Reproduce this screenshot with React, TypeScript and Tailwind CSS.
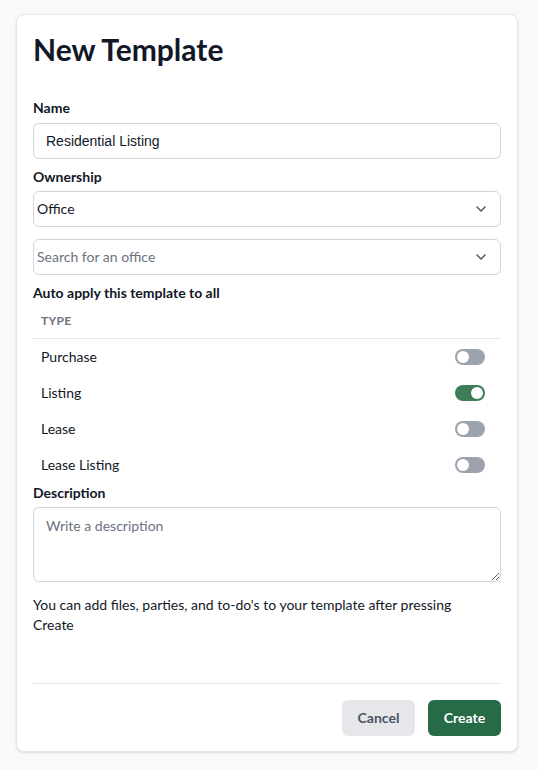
import React, { useState } from 'react';

const types = ['Purchase', 'Listing', 'Lease', 'Lease Listing'];

function Chevron() {
  return (
    <svg width="10" height="6" viewBox="0 0 10 6" fill="none" className="shrink-0">
      <path d="M1 1l4 4 4-4" stroke="#4b5563" strokeWidth="1.5" strokeLinecap="round" strokeLinejoin="round" />
    </svg>
  );
}

function Toggle({ on, onChange }: { on: boolean; onChange: () => void }) {
  return (
    <button
      type="button"
      onClick={onChange}
      className={`flex h-4 w-[30px] items-center rounded-full px-[2px] ${on ? 'bg-[#3e7d58] justify-end' : 'bg-[#9ca3af] justify-start'}`}
    >
      <span className="block h-3 w-3 rounded-full bg-white" />
    </button>
  );
}

export default function App() {
  const [enabled, setEnabled] = useState<Record<string, boolean>>({ Listing: true });

  return (
    <div className="min-h-[770px] bg-[#f8f9fb] pt-[14px] pl-4 font-['Lato',sans-serif] text-[#111827]">
      <div className="w-[502px] rounded-lg border border-[#e5e7eb] bg-white px-4 pt-4 pb-[15px] shadow-sm">
        <h1 className="mb-[31px] text-[30px] font-bold leading-9 text-[#111827]">New Template</h1>

        <label className="mb-[5px] block text-sm font-bold leading-5">Name</label>
        <input
          defaultValue="Residential Listing"
          className="block h-9 w-full rounded-md border border-[#d1d5db] px-3 font-['Liberation_Sans',Arial,sans-serif] text-sm text-[#111827] outline-none"
        />

        <label className="mt-2 mb-1 block text-sm font-bold leading-5">Ownership</label>
        <div className="flex h-9 w-full items-center justify-between rounded-md border border-[#d1d5db] pl-[3px] pr-[14px] text-sm text-[#111827]">
          <span>Office</span>
          <Chevron />
        </div>
        <div className="mt-3 flex h-9 w-full items-center justify-between rounded-md border border-[#d1d5db] pl-[3px] pr-[14px] text-sm text-[#6b7280]">
          <span>Search for an office</span>
          <Chevron />
        </div>

        <p className="mt-2 text-sm font-bold leading-5">Auto apply this template to all</p>
        <div className="flex h-9 items-center border-b border-[#e5e7eb] px-2 text-xs font-bold uppercase tracking-wide text-[#6b7280]">
          Type
        </div>
        {types.map((t) => (
          <div key={t} className="flex h-9 items-center justify-between pl-2 pr-4 text-sm text-[#111827]">
            <span>{t}</span>
            <Toggle on={!!enabled[t]} onChange={() => setEnabled({ ...enabled, [t]: !enabled[t] })} />
          </div>
        ))}

        <label className="mb-1 block text-sm font-bold leading-5">Description</label>
        <textarea
          placeholder="Write a description"
          className="block h-[75px] w-full rounded-md border border-[#d1d5db] px-3 py-2 text-sm text-[#111827] outline-none placeholder:text-[#6b7280]"
        />

        <p className="mt-[13px] w-[430px] text-sm leading-5 text-[#111827]">
          You can add files, parties, and to-do's to your template after pressing Create
        </p>

        <div className="mt-12 flex justify-end gap-[13px] border-t border-[#e5e7eb] pt-4">
          <button className="h-9 w-[73px] rounded-md bg-[#e5e7eb] text-sm font-bold text-[#4b5563]">Cancel</button>
          <button className="h-9 w-[73px] rounded-md bg-[#266a48] text-sm font-bold text-white">Create</button>
        </div>
      </div>
    </div>
  );
}
